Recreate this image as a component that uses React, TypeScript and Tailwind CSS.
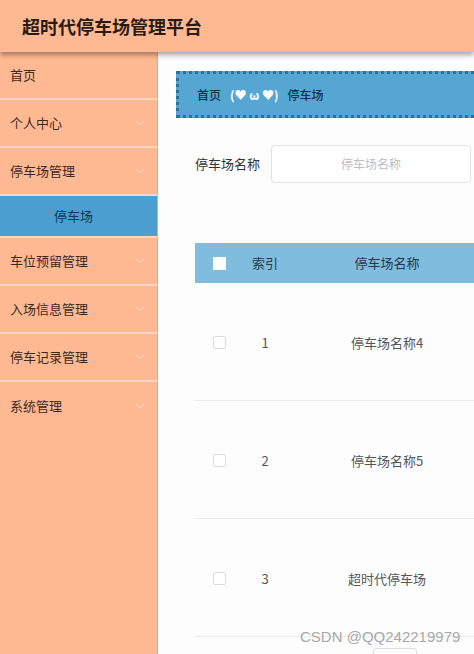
import { ChevronDown } from 'lucide-react'

const MENU = [
  { label: '首页', arrow: false },
  { label: '个人中心', arrow: true },
  { label: '停车场管理', arrow: true },
]

const MENU_AFTER = ['车位预留管理', '入场信息管理', '停车记录管理', '系统管理']

const ROWS = [
  { index: 1, name: '停车场名称4' },
  { index: 2, name: '停车场名称5' },
  { index: 3, name: '超时代停车场' },
]

function MenuItem({ label, arrow, last = false }: { label: string; arrow: boolean; last?: boolean }) {
  return (
    <div
      className={
        last
          ? 'flex h-[48px] items-center justify-between pl-[10px] pr-[10px] text-[13px] text-[#3b2a22]'
          : 'flex h-[48px] items-center justify-between border-b-2 border-[#ffd6bf] pl-[10px] pr-[10px] text-[13px] text-[#3b2a22]'
      }
    >
      <span>{label}</span>
      {arrow ? <ChevronDown className="h-[14px] w-[14px] text-[#ffe3d2]" strokeWidth={1.5} /> : null}
    </div>
  )
}

export default function App() {
  return (
    <div
      className="flex h-[654px] w-[474px] flex-col overflow-hidden bg-[#fdfdfd]"
      style={{ fontFamily: '"Noto Sans CJK SC", "Noto Sans", sans-serif' }}
    >
      <header className="relative z-10 flex h-[52px] shrink-0 items-center bg-[#ffb992] pl-[22px] shadow-[0_3px_5px_rgba(0,0,0,0.35)]">
        <h1 className="text-[18px] font-bold text-[#2a1a14]">超时代停车场管理平台</h1>
      </header>

      <div className="flex min-h-0 flex-1">
        <aside className="w-[158px] shrink-0 border-r border-[#e9a882] bg-[#ffb992]">
          {MENU.map((item) => (
            <MenuItem key={item.label} label={item.label} arrow={item.arrow} />
          ))}
          <div className="flex h-[42px] items-center border-b-2 border-[#ffd6bf] bg-[#4a9fd0] pl-[54px] text-[13px] text-[#173450]">
            停车场
          </div>
          {MENU_AFTER.map((label, i) => (
            <MenuItem key={label} label={label} arrow last={i === MENU_AFTER.length - 1} />
          ))}
        </aside>

        <main className="min-w-0 flex-1 overflow-hidden">
          <div className="w-[340px]">
            <div className="ml-[18px] mt-[19px] flex h-[47px] w-[330px] items-center border-[3px] border-dotted border-[#2f6f98] bg-[#56a6d4] pl-[18px] text-[12px] font-medium text-[#13304a]">
              <span>首页</span>
              <span className="ml-[9px] font-bold text-white">(♥ ω ♥)</span>
              <span className="ml-[9px]">停车场</span>
            </div>

            <div className="ml-[37px] mt-[27px] flex items-center">
              <span className="w-[76px] text-[13px] text-[#333]">停车场名称</span>
              <div className="flex h-[38px] w-[200px] items-center justify-center rounded-[4px] border border-[#e2e2e2] bg-white text-[12px] text-[#bdbdbd]">
                停车场名称
              </div>
            </div>

            <div className="ml-[37px] mt-[60px]">
              <div className="flex h-[40px] items-center bg-[#7fbcdd] text-[13px] text-[#233a4c]">
                <div className="flex w-[46px] justify-center pl-[2px]">
                  <span className="h-[13px] w-[13px] bg-white" />
                </div>
                <div className="w-[48px] text-center">索引</div>
                <div className="w-[196px] text-center">停车场名称</div>
              </div>
              {ROWS.map((row) => (
                <div key={row.index} className="flex h-[118px] items-center border-b border-[#ececec] pt-[2px] text-[13px] text-[#555]">
                  <div className="flex w-[46px] justify-center pl-[2px]">
                    <span className="h-[13px] w-[13px] rounded-[2px] border border-[#dcdcdc] bg-white" />
                  </div>
                  <div className="w-[48px] text-center">{row.index}</div>
                  <div className="w-[196px] text-center">{row.name}</div>
                </div>
              ))}
              <div className="ml-[178px] mt-[11px] h-[20px] w-[44px] rounded-[3px] border border-[#dcdcdc]" />
            </div>
          </div>
        </main>
      </div>

      <div
        className="pointer-events-none absolute left-[300px] top-[626px] text-[15px] text-[#a8a8a8]"
        style={{ fontFamily: '"Liberation Sans", sans-serif' }}
      >
        CSDN @QQ242219979
      </div>
    </div>
  )
}
